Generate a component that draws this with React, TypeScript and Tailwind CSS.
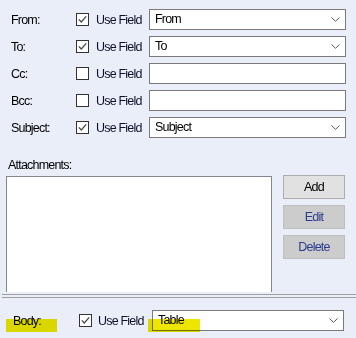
import React from "react";

const font = { fontFamily: '"Liberation Sans", Arial, sans-serif' };

function Check({ checked }: { checked: boolean }) {
  return (
    <div className="w-[13px] h-[13px] border border-[#333333] bg-white flex items-center justify-center shrink-0">
      {checked && (
        <svg width="11" height="11" viewBox="0 0 11 11">
          <path d="M1.8 5.4 L4.3 8 L9.2 2.4" fill="none" stroke="#4a4a4a" strokeWidth="1.3" />
        </svg>
      )}
    </div>
  );
}

function Chevron() {
  return (
    <svg width="9" height="5" viewBox="0 0 9 5" className="shrink-0">
      <path d="M0.5 0.5 L4.5 4.3 L8.5 0.5" fill="none" stroke="#5a5a5a" strokeWidth="1" />
    </svg>
  );
}

function Combo({ value, dropdown, w }: { value?: string; dropdown: boolean; w: string }) {
  return (
    <div className={`${w} shrink-0 h-[21px] border border-[#7a7a7a] bg-white flex items-center pl-[5px] pr-[5px]`}>
      <span className="flex-1 text-[#000000] leading-none">{value}</span>
      {dropdown && <Chevron />}
    </div>
  );
}

function Row({ label, checked, value, dropdown }: { label: string; checked: boolean; value?: string; dropdown: boolean }) {
  return (
    <div className="flex items-center h-[21px]">
      <div className="w-[76px] shrink-0 pl-[11px] text-[#000000]">{label}</div>
      <Check checked={checked} />
      <div className="w-[60px] shrink-0 pl-[7px] text-[#10102a] whitespace-nowrap">Use Field</div>
      <Combo value={value} dropdown={dropdown} w="w-[197px]" />
    </div>
  );
}

export default function App() {
  return (
    <div
      className="w-[356px] h-[338px] bg-[#eaeef9] relative overflow-hidden text-[12.5px] leading-[14px] tracking-[-0.8px]"
      style={font}
    >
      <div className="flex flex-col gap-[6px] pt-[9px]">
        <Row label="From:" checked value="From" dropdown />
        <Row label="To:" checked value="To" dropdown />
        <Row label="Cc:" checked={false} dropdown={false} />
        <Row label="Bcc:" checked={false} dropdown={false} />
        <Row label="Subject:" checked value="Subject" dropdown />
      </div>
      <div className="pl-[8px] mt-[20px] text-[#000000]">Attachments:</div>
      <div className="flex mt-[4px] h-[116px]">
        <div className="ml-[6px] w-[266px] h-full bg-white border-l border-r border-t border-[#828790]" />
        <div className="ml-[11px] w-[62px] flex flex-col gap-[6px] -mt-[1px]">
          <div className="h-[24px] bg-[#e1e1e1] border border-[#adadad] flex items-center justify-center text-[#000000]">Add</div>
          <div className="h-[24px] bg-[#cccccc] border border-[#bfbfbf] flex items-center justify-center text-[#2a3a8c]">Edit</div>
          <div className="h-[24px] bg-[#cccccc] border border-[#bfbfbf] flex items-center justify-center text-[#2a3a8c]">Delete</div>
        </div>
      </div>
      <div className="ml-[2px] mt-[2px] h-[1px] bg-[#a0a0a0]" />
      <div className="ml-[2px] mt-[2px] h-[1px] bg-[#a0a0a0]" />
      <div className="flex items-center h-[21px] mt-[12px] relative">
        <div className="w-[79px] shrink-0 pl-[13px] text-[#000000]">Body:</div>
        <Check checked />
        <div className="w-[60px] shrink-0 pl-[6px] text-[#10102a] whitespace-nowrap">Use Field</div>
        <Combo value="Table" dropdown w="w-[192px]" />
        <div className="absolute left-[6px] top-[9px] w-[51px] h-[13px] bg-[#eee600] mix-blend-multiply" />
        <div className="absolute left-[148px] top-[9px] w-[52px] h-[13px] bg-[#eee600] mix-blend-multiply" />
      </div>
    </div>
  );
}
